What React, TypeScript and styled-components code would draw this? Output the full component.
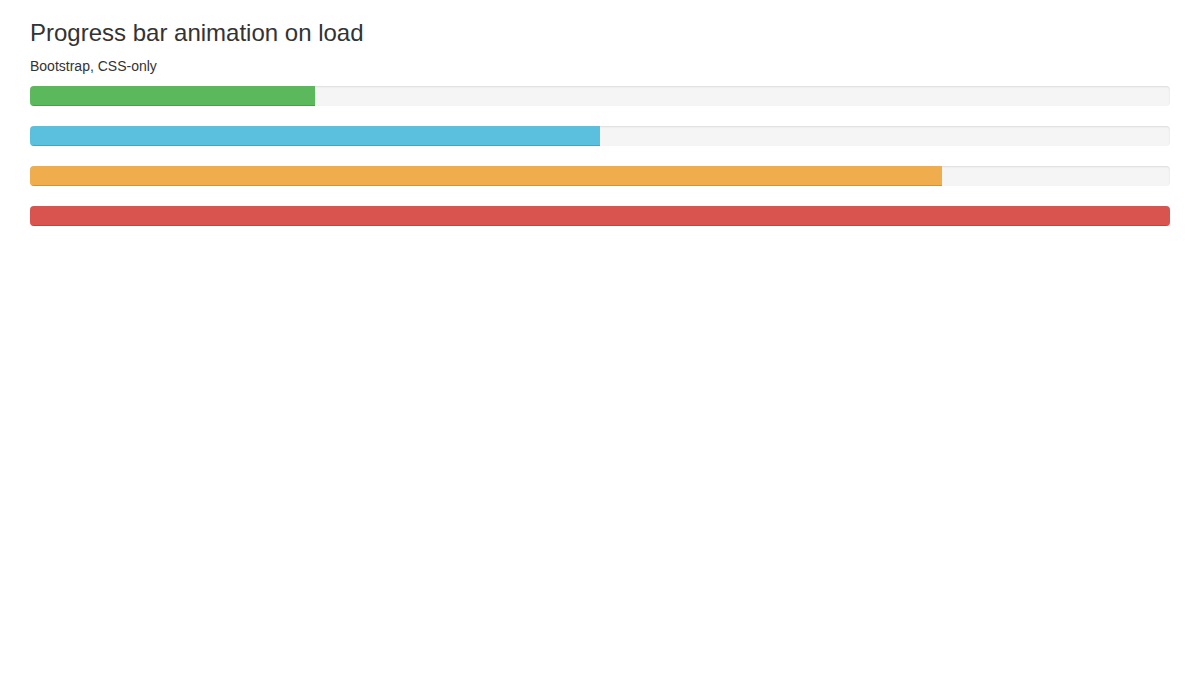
import React from "react";
import styled, { createGlobalStyle } from "styled-components";

const Global = createGlobalStyle`
  html, body { margin: 0; padding: 0; background: #fff; }
  body {
    font-family: "Liberation Sans", Arial, Helvetica, sans-serif;
    font-size: 14px;
    line-height: 1.42857143;
    color: #333;
  }
  * { box-sizing: border-box; }
`;

const Container = styled.div`
  padding: 0 30px;
`;

const Title = styled.h3`
  font-size: 24px;
  font-weight: 500;
  line-height: 1.1;
  margin: 20px 0 10px;
  color: #333;
`;

const Lead = styled.p`
  margin: 0 0 10px;
`;

const Track = styled.div`
  height: 20px;
  margin-bottom: 20px;
  overflow: hidden;
  background-color: #f5f5f5;
  border-radius: 4px;
  box-shadow: inset 0 1px 2px rgba(0, 0, 0, 0.1);
`;

const Bar = styled.div<{ $color: string }>`
  height: 100%;
  background-color: ${(p) => p.$color};
  box-shadow: inset 0 -1px 0 rgba(0, 0, 0, 0.15);
`;

const bars = [
  { color: "#5cb85c", pct: 25 },
  { color: "#5bc0de", pct: 50 },
  { color: "#f0ad4e", pct: 80 },
  { color: "#d9534f", pct: 100 },
];

export default function App() {
  return (
    <>
      <Global />
      <Container>
        <Title>Progress bar animation on load</Title>
        <Lead>Bootstrap, CSS-only</Lead>
        {bars.map((b) => (
          <Track key={b.color}>
            <Bar $color={b.color} style={{ width: `${b.pct}%` }} />
          </Track>
        ))}
      </Container>
    </>
  );
}
